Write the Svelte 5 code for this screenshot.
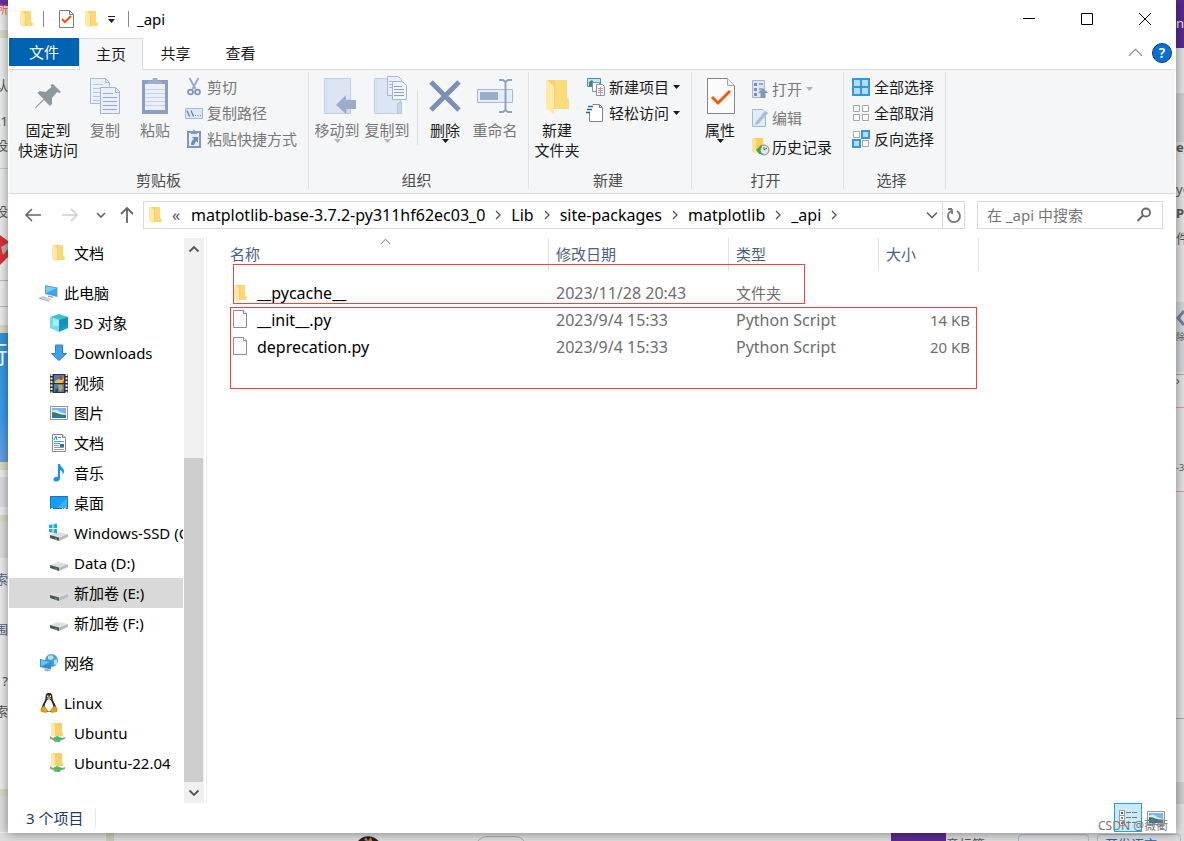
<script>
  const places = [
    { icon: 'folder', label: '文档', level: 2 },
    { icon: 'pc', label: '此电脑', level: 1 },
    { icon: 'cube', label: '3D 对象', level: 2 },
    { icon: 'download', label: 'Downloads', level: 2 },
    { icon: 'video', label: '视频', level: 2 },
    { icon: 'picture', label: '图片', level: 2 },
    { icon: 'document', label: '文档', level: 2 },
    { icon: 'music', label: '音乐', level: 2 },
    { icon: 'desktop', label: '桌面', level: 2 },
    { icon: 'windisk', label: 'Windows-SSD (C:)', level: 2 },
    { icon: 'disk', label: 'Data (D:)', level: 2 },
    { icon: 'disk', label: '新加卷 (E:)', level: 2, selected: true },
    { icon: 'disk', label: '新加卷 (F:)', level: 2 },
    { icon: 'network', label: '网络', level: 1 },
    { icon: 'linux', label: 'Linux', level: 1 },
    { icon: 'netfolder', label: 'Ubuntu', level: 2 },
    { icon: 'netfolder', label: 'Ubuntu-22.04', level: 2 },
  ];

  const crumbs = ['matplotlib-base-3.7.2-py311hf62ec03_0', 'Lib', 'site-packages', 'matplotlib', '_api'];

  const files = [
    { icon: 'folder', name: '__pycache__', date: '2023/11/28 20:43', type: '文件夹', size: '' },
    { icon: 'file', name: '__init__.py', date: '2023/9/4 15:33', type: 'Python Script', size: '14 KB' },
    { icon: 'file', name: 'deprecation.py', date: '2023/9/4 15:33', type: 'Python Script', size: '20 KB' },
  ];

  const isLatin = (s) => /^[\x00-\x7f]*$/.test(s);
</script>

{#snippet icon(name)}
  {#if name === 'folder'}
    <svg width="18" height="18" viewBox="0 0 18 18" aria-hidden="true">
      <path d="M4 1h9v11l1.500 1v3H4z" fill="#f6cf66" /><path d="M8 1h5v11l1.500 1v3H8z" fill="#f9d977" />
      <path d="M2 1h2l3 3v13l-1 .6L2 15z" fill="#fdeaa8" />
    </svg>
  {:else if name === 'file'}
    <svg width="18" height="20" viewBox="0 0 18 20" aria-hidden="true">
      <path d="M1.500 .5h10l3 3v14h-13z" fill="#f9fafb" stroke="#8b8f92" /><path d="M11.500 .5v3h3" fill="#fff" stroke="#8b8f92" />
    </svg>
  {:else if name === 'pc'}
    <svg width="20" height="18" viewBox="0 0 20 18" aria-hidden="true">
      <path d="M6 1l12.500 2.500V13L6 10z" fill="#7f97a8" /><path d="M7 2.300l10.500 2V11.700L7 9.200z" fill="#2fa8ee" /><path d="M7 2.300l10.500 2L7 9z" fill="#79ccf8" />
      <path d="M9 11.500l5 1v1.500L9 13z" fill="#9aa8b0" /><path d="M0 13.500l4-1.500 9 3-3 2z" fill="#c9d0d6" /><path d="M0 13.500l10 3.500v.7L0 14.500z" fill="#9aa3aa" />
    </svg>
  {:else if name === 'cube'}
    <svg width="18" height="18" viewBox="0 0 18 18" aria-hidden="true">
      <path d="M0 3l9-3 9 3-9 3z" fill="#3fc0ce" /><path d="M0 3l9 3v12l-9-4z" fill="#73dce4" /><path d="M18 3L9 6v12l9-4z" fill="#12a4b8" /><path d="M3 5l6 1v6H3z" fill="#a5edf0" /><path d="M9 6l9-3v7L9 16z" fill="#1791c4" />
    </svg>
  {:else if name === 'download'}
    <svg width="18" height="18" viewBox="0 0 18 18" aria-hidden="true"><path d="M5.500 1h7v8.500h4L9 16.500 1.500 9.500h4z" fill="#419fe8" stroke="#2a83cb" /></svg>
  {:else if name === 'video'}
    <svg width="18" height="19" viewBox="0 0 18 19" aria-hidden="true">
      <path d="M0 0h18v19H0z" fill="#333" /><path d="M4 1h10v8H4zM4 10h10v8H4z" fill="#477cc4" /><path d="M1.500 0v19M16.500 0v19" stroke="#eee" stroke-width="2" stroke-dasharray="2 1.500" />
      <path d="M9 5l4-3 1 4-2 3H5V7z" fill="#e6c53a" /><circle cx="11" cy="4" r="2" fill="#c43a32" /><path d="M8 11h4l1 3-3 4-1-3z" fill="#d5a733" /><path d="M5 16l3-2v4H5z" fill="#2d5639" />
    </svg>
  {:else if name === 'picture'}
    <svg width="18" height="14" viewBox="0 0 18 14" aria-hidden="true">
      <path d="M.5.5h17v13H.5z" fill="#fff" stroke="#929699" /><path d="M2 2h14v10H2z" fill="#78b6f1" /><path d="M2 5q4-3 8 1l6 2v4H2z" fill="#d6ecf9" /><path d="M2 6c5 0 7 3 14 3v3H2z" fill="#3e7764" /><path d="M2 10q7-1 14 1v1H2z" fill="#2377b5" />
    </svg>
  {:else if name === 'document'}
    <svg width="18" height="18" viewBox="0 0 18 18" aria-hidden="true">
      <path d="M2.500.5h10l3 3v14h-13z" fill="#fff" stroke="#85898c" /><path d="M12.500.5v3h3" fill="#ddd" stroke="#85898c" /><path d="M4 6l2-4 1 4M8 3.500h3" fill="none" stroke="#2685cb" /><path d="M4 7.500h10M4 9.500h6" stroke="#429bd7" /><path d="M4 11.500h5M4 13.500h10M4 15.500h10" stroke="#969a9d" /><path d="M10 10h4v3h-4z" fill="#386aa4" />
    </svg>
  {:else if name === 'music'}
    <svg width="18" height="18" viewBox="0 0 18 18" aria-hidden="true"><path d="M8 0h2c.3 3 4 4 4 7 0 2-1 3-1.500 4 .5-3-.5-4-2.500-5v8c0 2-1.500 3.500-4 3.500-1.700 0-2.500-.8-2.500-2 0-2 2-3 4.500-2.500z" fill="#1593e6" /></svg>
  {:else if name === 'desktop'}
    <svg width="18" height="14" viewBox="0 0 18 14" aria-hidden="true"><path d="M.5.5h17v12H.5z" fill="#189df5" stroke="#1476bb" /><path d="M7 12L17 2v10z" fill="#42b0f8" /><path d="M1 12.500h16" stroke="#c6e9fd" stroke-dasharray="2 9 1 1" /></svg>
  {:else if name === 'disk' || name === 'windisk'}
    <svg width="20" height="18" viewBox="0 0 20 18" aria-hidden="true">
      <path d="M1 11l8-3 10 2-9 3z" fill="#dcdedf" /><path d="M1 11l9 2.500v3.500L1 14z" fill="#505355" /><path d="M10 13.500l9-3.500v3l-9 4z" fill="#b9bcbe" /><path d="M6 14l2 .6v1.200l-2-.6z" fill="#3ac736" />
      {#if name === 'windisk'}<path d="M0 1l3.500-.7V4H0zM4.500.2L8-.5V4H4.500zM0 5h3.500v3.700L0 8zM4.500 5H8v4.500l-3.500-.7z" fill="#1caee9" />{/if}
    </svg>
  {:else if name === 'network'}
    <svg width="18" height="18" viewBox="0 0 18 18" aria-hidden="true">
      <circle cx="11.500" cy="6.500" r="6.500" fill="#4d9fc8" /><path d="M8 2l4-1 2 3-3 2-3-1zM14 6l3-1v5l-3 1z" fill="#b4dfed" /><path d="M0 5l11 2.500v8L0 13z" fill="#2d8fd6" /><path d="M1 6l9 2-9 4.500z" fill="#6dc2f1" /><path d="M5 14.500l4 1 2 1-4 1-3-1z" fill="#a8b3ba" />
    </svg>
  {:else if name === 'linux'}
    <svg width="18" height="20" viewBox="0 0 18 20" aria-hidden="true">
      <path d="M9 0c3 0 3.500 2 3.500 5 0 3 3.500 6 3.500 10l-4 4H6l-4-4c0-4 3.500-7 3.500-10C5.500 2 6 0 9 0z" fill="#20262b" /><path d="M9 6c2 0 4.500 6 4.500 9S11 18.500 9 18.500 4.500 17 4.500 14 7 6 9 6z" fill="#f7f8f8" />
      <path d="M6.500 5L9 4l2.500 1L9 7z" fill="#e2a526" /><circle cx="7.700" cy="3.200" r=".9" fill="#ddd" /><circle cx="10.300" cy="3.200" r=".9" fill="#ddd" />
      <path d="M1 15l3-2 4 5-2 1.500-5-1zM17 15l-3-2-4 5 2 1.500 5-1z" fill="#dda414" stroke="#9e760b" stroke-width=".5" />
    </svg>
  {:else if name === 'netfolder'}
    <svg width="18" height="20" viewBox="0 0 18 20" aria-hidden="true">
      <path d="M3 0h9v9l1 1v3H3z" fill="#f6d06b" /><path d="M1 0h2l2 2v12l-4-1z" fill="#fdeaa8" /><path d="M0 13l3 2h9l3-1v2l-4 1-1 2H5l-2-2-3-1z" fill="#8fa39b" /><path d="M3 15l4-2 5 2 2 1-6 2z" fill="#38c552" />
    </svg>
  {:else if name === 'checkdoc'}
    <svg width="17" height="20" viewBox="0 0 17 20" aria-hidden="true"><path d="M1.500 1.500h10l4 4v13h-14z" fill="#fbfbfb" stroke="#7b7e80" /><path d="M11.500 1.500v4h4" fill="none" stroke="#7b7e80" /><path d="M4 10l3 3 6-6" fill="none" stroke="#e9570d" stroke-width="2" /></svg>
  {:else if name === 'cut'}
    <svg width="18" height="18" viewBox="0 0 18 18" aria-hidden="true"><path d="M4.500 0l6 11M13.500 0l-6 11" stroke="#9aa9c2" stroke-width="1.800" /><circle cx="5.500" cy="14" r="2.400" fill="none" stroke="#8093b5" stroke-width="1.800" /><circle cx="12.500" cy="14" r="2.400" fill="none" stroke="#8093b5" stroke-width="1.800" /></svg>
  {:else if name === 'path'}
    <svg width="18" height="18" viewBox="0 0 18 18" aria-hidden="true"><path d="M.5 4.500h17v10H.5z" fill="#dee7f4" stroke="#a7b9d2" /><path d="M2 6.500l2.500 6M6 6.500l2.500 6" stroke="#697e9f" stroke-width="1.300" /><path d="M10 11.500h6" stroke="#697e9f" stroke-dasharray="1 1.500" /></svg>
  {:else if name === 'shortcut'}
    <svg width="18" height="20" viewBox="0 0 18 20" aria-hidden="true"><path d="M3 3h12v15H3z" fill="#e7eefa" stroke="#8196ba" stroke-width="2" /><path d="M6 2h2l1-2 1 2h2v3H6z" fill="#8196ba" /><path d="M7 8h6v6l-2-2-2 4H6c0-3 1-5 3-6z" fill="#6f8ab4" /></svg>
  {:else if name === 'newitem'}
    <svg width="20" height="20" viewBox="0 0 20 20" aria-hidden="true"><path d="M.5 1.500h13v8H.5z" fill="#bfe7f7" stroke="#468fac" /><path d="M2 5l3-2 2 3v3H2z" fill="#4a817d" /><path d="M5.500 5.500h7v9h-7z" fill="#fff" stroke="#8b8f92" /><path d="M9.500 7.500h6l2 2v9h-8z" fill="#fff" stroke="#8b8f92" /><path d="M11 11.500h5M11 13.500h5M11 15.500h5" stroke="#d48c94" /><path d="M13.500 10v8" stroke="#97acc0" /></svg>
  {:else if name === 'access'}
    <svg width="20" height="20" viewBox="0 0 20 20" aria-hidden="true"><path d="M2.500 1.500h10l3 3v14h-13z" fill="#fff" /><path d="M2.500 9v9.500h13v-14l-3-3h-7M12.500 1.500v3h3" fill="none" stroke="#808487" /><path d="M1 3.500h5M0 6.500h5M-1 9.500h4" stroke="#236aa5" stroke-width="1.300" /></svg>
  {:else if name === 'open'}
    <svg width="18" height="18" viewBox="0 0 18 18" aria-hidden="true"><path d="M1.500.5h12v17h-12z" fill="#dbe5f4" stroke="#a6b7cf" /><path d="M3 3h3v3H3zM3 8h3v3H3zM3 13h3v3H3z" fill="#7d91b1" /><path d="M8 4h4M8 9h3" stroke="#97a9c5" stroke-width="2" /><path d="M12 8l5 5h-2.500v5h-5v-5H7z" fill="#8497b8" /></svg>
  {:else if name === 'edit'}
    <svg width="18" height="18" viewBox="0 0 18 18" aria-hidden="true"><path d="M1.500.5h10l3 3v14h-13z" fill="#e3ebf8" stroke="#a6b7cf" /><path d="M4 16l1-3L14 2l3 2L7 15z" fill="#a9bad4" stroke="#c4d0e1" /></svg>
  {:else if name === 'history'}
    <svg width="18" height="19" viewBox="0 0 18 19" aria-hidden="true"><path d="M3 1h9v13H3z" fill="#f7cf5a" /><path d="M1 1h2l2 3v13l-4-2z" fill="#fde49b" /><circle cx="13" cy="13" r="5" fill="#e3e7e5" stroke="#7b8883" /><path d="M13 10v3l3-2" fill="none" stroke="#56615d" /><path d="M10 8l-5 5 3 4h5c-4-1-4-4-2-7z" fill="#3dab45" /></svg>
  {:else if name === 'selectall'}
    <svg width="18" height="18" viewBox="0 0 18 18" aria-hidden="true"><path d="M1 1h16v16H1zM9 1v16M1 9h16" fill="#b5dcfb" stroke="#3397e6" stroke-width="2" /></svg>
  {:else if name === 'selectnone'}
    <svg width="18" height="18" viewBox="0 0 18 18" aria-hidden="true"><path d="M1.500 1.500h6v6h-6zM10.500 1.500h6v6h-6zM1.500 10.500h6v6h-6zM10.500 10.500h6v6h-6z" fill="#fdfdfd" stroke="#a3a7aa" /></svg>
  {:else if name === 'invert'}
    <svg width="18" height="18" viewBox="0 0 18 18" aria-hidden="true"><path d="M1.500 1.500h6v6h-6zM10.500 10.500h6v6h-6z" fill="#fdfdfd" stroke="#a3a7aa" /><path d="M10 1h7v7h-7zM1 10h7v7H1z" fill="#b5dcfb" stroke="#3397e6" stroke-width="2" /></svg>
  {:else if name === 'pin'}
    <svg width="36" height="38" viewBox="0 0 36 38" aria-hidden="true"><path d="M23 7l8 8-2 1-2-1-5 6v6l-2 2-6-6-8 8-1 .5.5-1.500 8-8-6-6 2-2 6 1 6-5-1-2z" fill="#8d979e" /></svg>
  {:else if name === 'copy'}
    <svg width="36" height="38" viewBox="0 0 36 38" aria-hidden="true"><path d="M3.500 1.500h15l4 4v21h-19z" fill="#e9f0fb" stroke="#a9bad3" /><path d="M18.500 1.500v4h4" fill="none" stroke="#a9bad3" /><path d="M6 7.500h10M6 11.500h13M6 15.500h13M6 19.500h13M6 23.500h13" stroke="#bac7dd" /><path d="M13.500 10.500h15l4 4v22h-19z" fill="#e9f0fb" stroke="#a0b3cf" /><path d="M28.500 10.500v5h4" fill="none" stroke="#a0b3cf" /><path d="M16 16.500h10M16 20.500h14M16 24.500h14M16 28.500h14M16 32.500h14" stroke="#97a9c6" /></svg>
  {:else if name === 'paste'}
    <svg width="36" height="38" viewBox="0 0 36 38" aria-hidden="true"><path d="M5 3h26v34H5z" fill="#8c9fc0" /><path d="M8 7h20v26H8z" fill="#e9f0fb" /><path d="M8 12.500h20M8 16.500h20M8 20.500h20M8 24.500h20M8 28.500h20" stroke="#c5d2e6" /><path d="M11 4h4l1-3h4l1 3h4v3H11z" fill="#9dafca" /></svg>
  {:else if name === 'moveto' || name === 'copyto'}
    <svg width="36" height="38" viewBox="0 0 36 38" aria-hidden="true"><path d="M5.500 1.500h26v35h-26z" fill="#dbe5f4" stroke="#bfcee3" /><path d="M8 2v34" stroke="#cddaed" />
      {#if name === 'moveto'}<path d="M27.500 23h4v13.500h-4z" fill="#cddaec" stroke="#b8c7dd" /><path d="M17 28l10-10v5h10v9H27v5z" fill="#9cadc9" />{:else}<path d="M18.500-.5h11l3 3v16h-14z" fill="#e9f0fb" stroke="#a5b7d1" /><path d="M20 4.500h8M20 7.500h8M20 10.500h8" stroke="#a5b7d1" /><path d="M23.500 4.500h10l4 4v14h-14z" fill="#f0f5fd" stroke="#a0b3cf" /><path d="M25 9.500h8M25 12.500h10M25 15.500h10M25 18.500h10" stroke="#8fa2c0" /><path d="M28.500 26.500l4-2v12h-4z" fill="#c7d5e9" stroke="#b5c5dc" />{/if}
    </svg>
  {:else if name === 'delete'}
    <svg width="36" height="38" viewBox="0 0 36 38" aria-hidden="true"><path d="M4 5l28 28M32 5L4 33" stroke="#7d90b2" stroke-width="5" /></svg>
  {:else if name === 'rename'}
    <svg width="38" height="38" viewBox="0 0 38 38" aria-hidden="true"><path d="M1.500 12.500h35v13h-35z" fill="#e4edfa" stroke="#a8bad4" /><path d="M4 15h18v8H4z" fill="#9badc9" /><path d="M23 3h4l2.500 2L32 3h4M23 35h4l2.500-2 2.500 2h4M29.500 5v28" fill="none" stroke="#8fa2c1" stroke-width="2" /></svg>
  {:else if name === 'newfolder'}
    <svg width="36" height="38" viewBox="0 0 36 38" aria-hidden="true"><path d="M7 3h21v18l2 2v9H7z" fill="#f7d36d" /><path d="M16 3h12v18l2 2v9H16z" fill="#fadb7c" /><path d="M7 3h1l7 6v27l-1 1-7-6z" fill="#fdeaa6" /></svg>
  {:else if name === 'properties'}
    <svg width="36" height="38" viewBox="0 0 36 38" aria-hidden="true"><path d="M5.500 1.500h20l7 7v28h-27z" fill="#fbfbfb" stroke="#848789" /><path d="M25.500 1.500v7h7" fill="#eee" stroke="#a4a7a9" /><path d="M10 20l6 6 12-12" fill="none" stroke="#f05a12" stroke-width="3" /></svg>
  {/if}
{/snippet}

{#snippet caret()}
  <svg class="caret" width="7" height="4" viewBox="0 0 7 4" aria-hidden="true"><path d="M0 0h7L3.500 4z" fill="currentColor" /></svg>
{/snippet}

{#snippet chevron(d, size = 12, width = 1.5)}
  <svg width={size} height={size} viewBox="0 0 12 12" aria-hidden="true"><path {d} fill="none" stroke="currentColor" stroke-width={width} /></svg>
{/snippet}

{#snippet big(name, lines, disabled = false, arrow = false)}
  <button class="big" {disabled}>
    {@render icon(name)}
    <span class="lines">{#each lines as line}<span>{line}</span>{/each}</span>
    {#if arrow}{@render caret()}{/if}
  </button>
{/snippet}

{#snippet small(name, label, disabled = false, arrow = false)}
  <button class="small" {disabled}><span class="slot">{@render icon(name)}</span>{label}{#if arrow}{@render caret()}{/if}</button>
{/snippet}

<div class="screen">
  <div class="behind" aria-hidden="true">
    <div class="edge left">
      <i style="top:0;height:6px;background:#63309d"></i><i style="top:30px;height:8px;background:#d9dbc6"></i>
      <i style="top:168px;height:1px;background:#ccc"></i><i style="top:280px;height:1px;background:#b9bccb"></i><i style="top:306px;height:1px;background:#b9bccb"></i>
      <i style="top:325px;height:8px;background:#d9dbc6"></i><i style="top:333px;height:129px;background:linear-gradient(#3692db,#3d9ced 65%,#6b9fe2)"></i>
      <i style="top:462px;height:8px;background:#d9dbc6"></i><i style="top:477px;height:30px;background:#dcdce3"></i><i style="top:515px;height:7px;background:#d9dbc6"></i><i style="top:522px;height:36px;background:#dedede"></i>
      <i style="top:789px;height:7px;background:#d9dbc6"></i><i style="top:796px;height:36px;background:#dedede"></i>
      <svg width="8" height="30" style="top:235px"><path d="M0 0l8 6v16L0 30z" fill="#d83238" /><path d="M1 12l7-4v6l-5 6z" fill="#b9b5b3" /></svg>
      <b style="top:1px;color:#f06054;font-size:11px">所</b><b style="top:76px">认</b><b style="top:112px">21</b><b style="top:136px">设</b><b style="top:202px">设</b><b style="top:345px;color:#fff;font-size:24px">行</b>
      <b style="top:570px;color:#56618a">的索</b><b style="top:620px;color:#56618a">范围</b><b style="top:672px">?</b><b style="top:702px">来索</b>
    </div>
    <div class="edge right">
      <i style="top:0;height:48px;background:#59298f"></i><i style="top:93px;height:49px;background:#cfcfcf"></i><i style="top:302px;height:70px;background:#d3d5d9"></i><i style="top:374px;height:1px;background:#aaa"></i>
      <i style="top:407px;height:1px;background:#e79a9e"></i><i style="top:491px;height:1px;background:#e79a9e"></i><i style="top:718px;height:1px;background:#aaa"></i><i style="top:782px;height:22px;background:#cfcfd1"></i>
      <svg width="8" height="18" style="top:309px"><path d="M8 2L2 9l6 7" fill="none" stroke="#72819e" stroke-width="3" /></svg>
      <b style="top:14px;color:#eee">n</b><b style="top:138px;font-weight:700">e_</b><b style="top:180px">yo</b><b style="top:204px;font-weight:700">P</b><b style="top:229px">件</b><b style="top:328px;font-size:9px">除</b><b style="top:372px;font-size:12px">›</b><b style="top:459px;font-size:9px">-31</b>
    </div>
    <div class="bottom">
      <i style="left:106px;width:8px;background:#c9ccb6"></i><i style="left:891px;width:55px;background:#5b2a91"></i>
      <span class="pill" style="left:475px;width:52px"></span><span class="pill blue" style="left:1018px;width:71px"></span><span class="pill blue" style="left:1097px;width:84px"></span>
      <svg width="28" height="10" style="left:355px"><path d="M2 10C6 1 20 1 25 10z" fill="#241c1c" /><path d="M9 7l2-3 2 4 3-4 2 6z" fill="#b77c43" /></svg>
      <b style="left:946px">章标签</b><b style="left:1105px;color:#2666a8">开发语言</b>
    </div>
  </div>

  <main class="window">
    <header class="title">
      <span class="quick">
        {@render icon('folder')}<span class="bar"></span>
        <button class="plain" aria-label="属性">{@render icon('checkdoc')}</button>
        <button class="plain" aria-label="新建文件夹">{@render icon('folder')}</button>
        <button class="plain more" aria-label="自定义"><svg width="9" height="8" viewBox="0 0 9 8"><path d="M1 1.500h7" stroke="#222" /><path d="M1 4h7L4.500 8z" fill="#222" /></svg></button>
        <span class="bar"></span>
      </span>
      <h1>_api</h1>
      <span class="controls">
        <button aria-label="最小化"><svg width="12" height="12"><path d="M0 5.500h12" stroke="#000" /></svg></button>
        <button aria-label="最大化"><svg width="12" height="12"><path d="M.5.5h11v11H.5z" fill="none" stroke="#000" /></svg></button>
        <button aria-label="关闭"><svg width="12" height="12"><path d="M0 0l12 12M12 0L0 12" stroke="#000" /></svg></button>
      </span>
    </header>

    <nav class="tabs">
      <button class="filetab">文件</button><button class="active">主页</button><button>共享</button><button>查看</button>
      <span class="help">
        <button class="plain collapse" aria-label="折叠">{@render chevron('M0 9l6-6 6 6', 13, 1)}</button>
        <button class="question" aria-label="帮助">?</button>
      </span>
    </nav>

    <div class="ribbon">
      <section class="clip">
        <div class="tools">
          {@render big('pin', ['固定到', '快速访问'])}{@render big('copy', ['复制'], true)}{@render big('paste', ['粘贴'], true)}
          <div class="stack">{@render small('cut', '剪切', true)}{@render small('path', '复制路径', true)}{@render small('shortcut', '粘贴快捷方式', true)}</div>
        </div>
        <h2>剪贴板</h2>
      </section>
      <section class="organize">
        <div class="tools">
          {@render big('moveto', ['移动到'], true, true)}{@render big('copyto', ['复制到'], true, true)}<span class="split"></span>{@render big('delete', ['删除'], false, true)}{@render big('rename', ['重命名'], true)}
        </div>
        <h2>组织</h2>
      </section>
      <section class="new">
        <div class="tools">
          {@render big('newfolder', ['新建', '文件夹'])}
          <div class="stack">{@render small('newitem', '新建项目', false, true)}{@render small('access', '轻松访问', false, true)}</div>
        </div>
        <h2>新建</h2>
      </section>
      <section class="open">
        <div class="tools">
          {@render big('properties', ['属性'], false, true)}
          <div class="stack roomy">{@render small('open', '打开', true, true)}{@render small('edit', '编辑', true)}{@render small('history', '历史记录')}</div>
        </div>
        <h2>打开</h2>
      </section>
      <section class="select">
        <div class="tools">
          <div class="stack">{@render small('selectall', '全部选择')}{@render small('selectnone', '全部取消')}{@render small('invert', '反向选择')}</div>
        </div>
        <h2>选择</h2>
      </section>
    </div>

    <div class="location">
      <div class="history">
        <button class="plain" aria-label="后退"><svg width="16" height="14"><path d="M1 7h15M7 1L1 7l6 6" fill="none" stroke="#666" stroke-width="1.600" /></svg></button>
        <button class="plain" aria-label="前进" disabled><svg width="16" height="14"><path d="M0 7h15M9 1l6 6-6 6" fill="none" stroke="#d0d0d0" stroke-width="1.600" /></svg></button>
        <button class="plain" aria-label="最近位置">{@render chevron('M2 4l4 4 4-4', 12, 1.6)}</button>
        <button class="plain" aria-label="向上"><svg width="14" height="16"><path d="M7 1v15M1 7l6-6 6 6" fill="none" stroke="#666" stroke-width="1.800" /></svg></button>
      </div>
      <div class="address">
        {@render icon('folder')}<span class="dbl">«</span>
        {#each crumbs as crumb}
          <a href="#top">{crumb}</a><span class="sep">{@render chevron('M4 2l4 4-4 4', 12, 1.3)}</span>
        {/each}
        <button class="plain drop" aria-label="展开">{@render chevron('M1 3.500l5 5 5-5', 12, 1.6)}</button>
        <button class="plain refresh" aria-label="刷新"><svg width="16" height="18"><path d="M5 4a6 6 0 1 0 6 0M6 2H2M6 2v5" transform="translate(0 1)" fill="none" stroke="#777" stroke-width="1.800" /></svg></button>
      </div>
      <label class="search"><input placeholder="在 _api 中搜索" aria-label="搜索" /><svg width="16" height="16"><circle cx="10" cy="5.500" r="4" fill="none" stroke="#666" stroke-width="1.800" /><path d="M7 8.500L1.500 14" stroke="#666" stroke-width="2" /></svg></label>
    </div>

    <div class="body">
      <aside>
        <ul>
          {#each places as p, i}
            <li class:gap={p.level === 1 && i > 0} class:selected={p.selected}>
              <a href="#top" class:top={p.level === 1}><span class="slot">{@render icon(p.icon)}</span>{p.label}</a>
            </li>
          {/each}
        </ul>
      </aside>
      <div class="scroll">
        <button class="plain" aria-label="向上滚动">{@render chevron('M1.500 8.500L6 4l4.500 4.500', 12, 1.8)}</button>
        <span class="track"><span class="thumb"></span></span>
        <button class="plain" aria-label="向下滚动">{@render chevron('M1.500 3.500L6 8l4.500-4.500', 12, 1.8)}</button>
      </div>

      <div class="content">
        <table>
          <colgroup><col class="c-name" /><col class="c-date" /><col class="c-type" /><col class="c-size" /><col /></colgroup>
          <thead>
            <tr><th>名称<span class="sort">{@render chevron('M1 8.500l5-5 5 5', 11, 1)}</span></th><th>修改日期</th><th>类型</th><th>大小</th><td></td></tr>
          </thead>
          <tbody>
            {#each files as f}
              <tr>
                <td class="name"><span class="cell"><span class="slot">{@render icon(f.icon)}</span>{f.name}</span></td>
                <td>{f.date}</td><td class:cjk={!isLatin(f.type)}>{f.type}</td><td class="size">{f.size}</td><td></td>
              </tr>
            {/each}
          </tbody>
        </table>
        <span class="mark first"></span><span class="mark second"></span>
      </div>
    </div>

    <footer>
      <span class="count">3 个项目</span>
      <span class="views">
        <button class="plain details" aria-label="详细信息"><svg width="18" height="16"><path d="M.5.500h5v15h-5zM.5 5.500h5M.5 10.500h5" fill="#fff" stroke="#999" /><path d="M2 3h2" stroke="#385b87" stroke-width="2" /><path d="M2 8h2" stroke="#a06a4a" stroke-width="2" /><path d="M2 13h2" stroke="#c8343c" stroke-width="2" /><path d="M7 2.500h11M7 7.500h11M7 12.500h11" stroke="#777" stroke-dasharray="5 1" /></svg></button>
        <button class="plain" aria-label="大图标">{@render icon('picture')}</button>
      </span>
    </footer>
    <span class="watermark">CSDN @薇衢</span>
  </main>
</div>

<style>
  :global(body) { margin: 0; }
  .screen, .screen * { box-sizing: border-box; }
  .screen {
    position: relative; display: flex; min-height: 100vh; padding: 0 8px 8px; overflow: hidden; background: #e8e8e8;
    font: 15px/20px "Noto Sans", "Noto Sans CJK SC", sans-serif; color: #1a1a1a;
  }
  button, input { font: inherit; color: inherit; }
  button { border: 0; padding: 0; background: none; display: flex; align-items: center; justify-content: center; white-space: nowrap; }
  svg { display: block; flex: none; overflow: visible; }
  a { color: inherit; text-decoration: none; }
  h1, h2 { margin: 0; font: inherit; }

  .behind i, .behind b, .behind svg, .pill { position: absolute; }
  .behind b { font-weight: 400; font-size: 13px; line-height: 18px; color: #555; white-space: nowrap; }
  .edge { position: absolute; top: 0; bottom: 0; width: 8px; overflow: hidden; }
  .edge i { left: 0; right: 0; }
  .left { left: 0; background: #ededed; }
  .left b { right: 0; }
  .right { right: 0; background: #e3e3e3; }
  .right b { left: 0; }
  .bottom { position: absolute; left: 0; right: 0; bottom: 0; height: 8px; overflow: hidden; background: #dcdcdc; }
  .bottom i { top: 0; bottom: 0; }
  .bottom b { top: 2px; }
  .pill { top: 3px; height: 24px; border: 1px solid #aaa9b6; border-radius: 12px; }
  .pill.blue { border-color: #a9bbd3; border-radius: 4px; top: 1px; }

  .window { position: relative; flex: 1; min-width: 0; display: flex; flex-direction: column; background: #fff; box-shadow: 0 0 10px rgba(0, 0, 0, .45); padding: 0 1px; }

  .title { display: flex; align-items: center; height: 38px; }
  .quick { display: flex; align-items: center; padding-left: 9px; }
  .bar { width: 1px; height: 16px; background: #888; }
  .quick > .bar:nth-child(2) { margin: 0 14px 0 7px; }
  .quick .plain { margin-right: 8px; }
  .quick .more { margin: 0 12px 0 -2px; }
  h1 { padding-left: 8px; color: #000; }
  .controls { display: flex; margin-left: auto; padding-right: 1px; }
  .controls button { width: 58px; height: 38px; }

  .tabs { display: flex; height: 32px; border-bottom: 1px solid #dadbdc; }
  .tabs > button { width: 65px; height: 31px; padding-bottom: 2px; }
  .tabs > .filetab { width: 70px; height: 28px; padding: 0; background: #0063b1; color: #fff; }
  .tabs > .active { width: 64px; height: 32px; background: #f5f6f7; border: 1px solid #dadbdc; border-bottom: 0; }
  .help { display: flex; align-items: center; gap: 10px; margin-left: auto; padding: 0 3px 2px 0; }
  .collapse { color: #8a8a8a; }
  .question { width: 20px; height: 20px; border: 1px solid #07417c; border-radius: 50%; background: #0a6fd0; color: #fff; font-weight: 600; font-size: 14px; }

  .ribbon { display: flex; padding: 2px 0 4px; background: #f5f6f7; border-bottom: 1px solid #dadbdc; }
  .ribbon section { display: flex; flex-direction: column; justify-content: space-between; height: 117px; border-right: 1px solid #e0e2e4; }
  .clip { width: 300px; padding-left: 7px; }
  .organize { width: 220px; padding-left: 3px; }
  .new { width: 163px; padding-left: 3px; }
  .open { width: 152px; padding-left: 3px; }
  .select { width: 102px; padding-left: 8px; }
  .tools { display: flex; align-items: flex-start; padding-top: 4px; }
  h2 { text-align: center; line-height: 18px; color: #4c4c4c; }
  .ribbon h2 { padding-right: 7px; }
  .ribbon .select h2 { padding-right: 14px; }
  .big { flex-direction: column; justify-content: flex-start; width: 50px; padding-top: 1px; }
  .clip .big:first-child { width: 64px; }
  .lines { display: flex; flex-direction: column; align-items: center; padding-top: 5px; }
  .big .caret { margin-top: -1px; }
  .ribbon button:disabled { color: #787878; }
  .ribbon button:disabled .caret { color: #b3b3b3; }
  .split { width: 1px; height: 55px; margin: 14px 2px 0 5px; background: #dcdee0; }
  .stack { display: flex; flex-direction: column; align-items: flex-start; padding-left: 5px; margin-top: -2px; }
  .select .stack { padding-left: 0; }
  .small { height: 26px; }
  .small .slot { width: 18px; margin-right: 4px; }
  .roomy { padding-left: 6px; }
  .roomy .slot { margin-right: 3px; }
  .roomy .small { height: 29px; }
  .small .caret { margin-left: 4px; }

  .location { display: flex; align-items: center; height: 43px; padding: 0 12px 2px 0; }
  .history { display: grid; grid-template-columns: 38px 36px 25px 27px; padding-left: 5px; width: 134px; color: #666; }
  .history .plain { height: 28px; }
  .address { display: flex; align-items: center; flex: 1; min-width: 0; height: 28px; padding-left: 3px; border: 1px solid #d9d9d9; color: #000; font-size: 16px; }
  .dbl { width: 26px; padding-left: 7px; color: #555; }
  .sep { width: 26px; display: flex; justify-content: center; color: #555; }
  .drop { margin-left: auto; width: 20px; color: #666; }
  .refresh { width: 22px; height: 26px; border-left: 1px solid #d9d9d9; }
  .search { display: flex; align-items: center; width: 186px; height: 28px; margin-left: 12px; padding: 0 10px 0 9px; border: 1px solid #d9d9d9; }
  .search input { flex: 1; min-width: 0; padding: 0; border: 0; outline: 0; background: none; }
  .search input::placeholder { color: #757575; opacity: 1; }

  .body { display: flex; flex: 1; padding-top: 1px; }
  aside { width: 174px; overflow: hidden; color: #000; }
  ul { margin: 0; padding: 0; list-style: none; }
  li.gap { margin-top: 10px; }
  li.selected { background: #d9d9d9; }
  li a { display: flex; align-items: center; height: 30px; padding-left: 41px; white-space: nowrap; }
  li a.top { padding-left: 31px; }
  li .slot { display: flex; justify-content: center; width: 18px; margin-right: 6px; }
  .scroll { display: flex; flex-direction: column; width: 20px; margin: 0 2px 0 1px; background: #f0f0f0; color: #555; }
  .scroll .plain { height: 21px; }
  .track { display: flex; flex: 1; flex-direction: column; justify-content: flex-end; }
  .thumb { width: 19px; height: 62%; background: #cdcdcd; }
  .content { position: relative; flex: 1; min-width: 0; border-left: 1px solid #ececec; }

  table { width: 100%; table-layout: fixed; border-collapse: separate; border-spacing: 0; color: #6d6d6d; }
  .c-name { width: 342px; }
  .c-date { width: 180px; }
  .c-type { width: 150px; }
  .c-size { width: 100px; }
  th, td { padding: 0 0 0 7px; text-align: left; font-weight: 400; white-space: nowrap; }
  th { position: relative; height: 33px; padding-bottom: 2px; border-right: 1px solid #e2e2e2; color: #4c607a; }
  th:first-child, td.name { padding-left: 23px; }
  .sort { position: absolute; top: -2px; left: 173px; color: #666; }
  tbody { font-size: 16px; }
  tbody::before { content: ""; display: table-row; height: 8px; }
  tbody td { height: 27px; }
  .name { color: #000; }
  .cell { display: flex; align-items: center; }
  .cell .slot { width: 18px; margin: 0 7px 0 2px; }
  td.cjk, td.size { font-size: 15px; }
  td.size { text-align: right; padding-right: 9px; }
  .mark { position: absolute; border: 1px solid #f5413f; }
  .first { left: 26px; top: 26px; width: 572px; height: 40px; }
  .second { left: 23px; top: 69px; width: 747px; height: 82px; }

  footer { display: flex; align-items: center; height: 30px; padding-bottom: 1px; color: #1e3a5f; }
  .count { padding: 0 12px 0 17px; border-right: 1px solid #e7e7e7; line-height: 18px; }
  .views { display: flex; margin-left: auto; padding-right: 7px; }
  .views .plain { width: 24px; height: 29px; }
  .views .details { width: 28px; border: 1px solid #26a0da; background: #cbe8f6; margin-right: 2px; }
  .watermark { position: absolute; right: 8px; bottom: -1px; font-size: 12px; line-height: 16px; color: #777; }
</style>
